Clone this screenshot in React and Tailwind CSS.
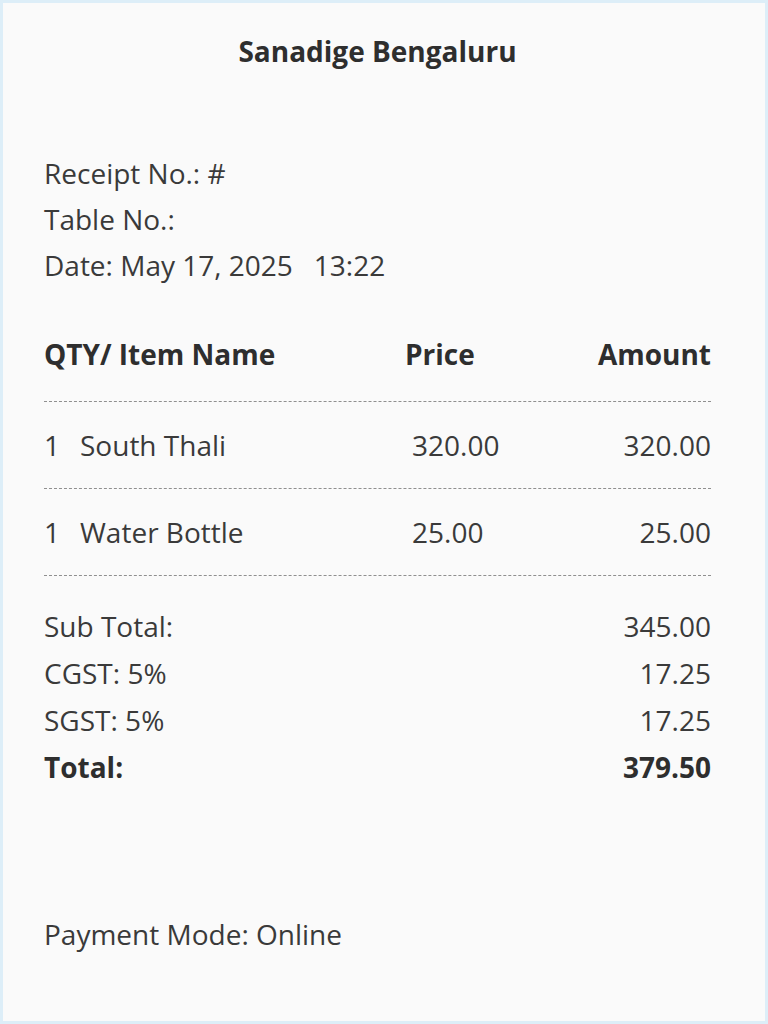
import React from "react";

const items = [
  { qty: 1, name: "South Thali", price: "320.00", amount: "320.00" },
  { qty: 1, name: "Water Bottle", price: "25.00", amount: "25.00" },
];

const totals = [
  { label: "Sub Total:", value: "345.00" },
  { label: "CGST: 5%", value: "17.25" },
  { label: "SGST: 5%", value: "17.25" },
];

const Dashed = () => (
  <div className="border-t border-dashed border-[#8f8f8f]" />
);

const App = () => {
  return (
    <div
      className="h-[1024px] w-[768px] border-[3px] border-[#ddeef8] bg-[#fafafa] text-[#3a3a3a]"
      style={{ fontFamily: '"Open Sans", "Liberation Sans", sans-serif' }}
    >
      <div className="flex flex-col pt-[30px] pl-[41px] pr-[54px]">
        {/* Header */}
        <h1 className="text-center text-[28px] leading-[36px] font-bold text-[#2e2e2e]">
          Sanadige Bengaluru
        </h1>

        {/* Receipt info */}
        <div className="mt-[81px] text-[28px] leading-[46px]">
          <p>Receipt No.: #</p>
          <p>Table No.:</p>
          <p>
            Date: May 17, 2025<span className="ml-[21px]">13:22</span>
          </p>
        </div>

        {/* Items */}
        <div className="mt-[43px] grid grid-cols-[361px_1fr_auto] text-[28px] leading-[46px] font-bold text-[#2e2e2e]">
          <span>QTY/ Item Name</span>
          <span>Price</span>
          <span className="text-right">Amount</span>
        </div>
        <div className="mt-[24px]">
          <Dashed />
        </div>
        {items.map((item, idx) => (
          <div key={idx}>
            <div className="grid grid-cols-[361px_1fr_auto] items-center h-[86px] text-[28px]">
              <span className="flex gap-[20px]">
                <span>{item.qty}</span>
                <span>{item.name}</span>
              </span>
              <span className="pl-[7px]">{item.price}</span>
              <span className="text-right">{item.amount}</span>
            </div>
            <Dashed />
          </div>
        ))}

        {/* Totals */}
        <div className="mt-[27px] text-[28px] leading-[47px]">
          {totals.map((t) => (
            <div key={t.label} className="flex justify-between">
              <span>{t.label}</span>
              <span>{t.value}</span>
            </div>
          ))}
          <div className="flex justify-between font-bold text-[#2e2e2e]">
            <span>Total:</span>
            <span>379.50</span>
          </div>
        </div>

        {/* Footer */}
        <p className="mt-[120px] text-[28px] leading-[46px]">
          Payment Mode: Online
        </p>
      </div>
    </div>
  );
};

export default App;
